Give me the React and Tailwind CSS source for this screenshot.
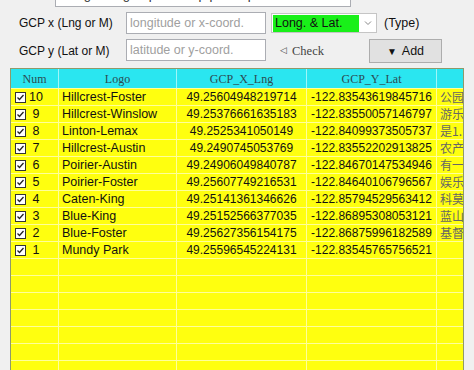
import React from 'react'

const rows = [
  [10, 'Hillcrest-Foster', '49.25604948219714', '-122.83543619845716', '公园'],
  [9, 'Hillcrest-Winslow', '49.25376661635183', '-122.83550057146797', '游乐'],
  [8, 'Linton-Lemax', '49.2525341050149', '-122.84099373505737', '是1.'],
  [7, 'Hillcrest-Austin', '49.2490745053769', '-122.83552202913825', '农产'],
  [6, 'Poirier-Austin', '49.24906049840787', '-122.84670147534946', '有一'],
  [5, 'Poirier-Foster', '49.25607749216531', '-122.84640106796567', '娱乐'],
  [4, 'Caten-King', '49.25141361346626', '-122.85794529563412', '科莫'],
  [3, 'Blue-King', '49.25152566377035', '-122.86895308053121', '蓝山'],
  [2, 'Blue-Foster', '49.25627356154175', '-122.86875996182589', '基督'],
  [1, 'Mundy Park', '49.25596545224131', '-122.83545765756521', ''],
]

const CheckBox = () => (
  <span className="ml-[4px] w-[11px] h-[11px] border border-[#333] bg-white flex items-center justify-center shrink-0">
    <svg width="9" height="9" viewBox="0 0 9 9">
      <path d="M1.5 4.5 L3.5 6.5 L7.5 2" fill="none" stroke="#222" strokeWidth="1.3" />
    </svg>
  </span>
)

const Row = ({ r }) => (
  <div className="flex h-[17px] border-b border-[#ffff9a] text-[12px] leading-[16px] text-[#111]">
    <div className="w-[48px] flex items-center border-r border-[#ffff9a]">
      {r && <CheckBox />}
      {r && <span className="ml-[2px] w-[16px] text-center text-[12.5px]">{r[0]}</span>}
    </div>
    <div className="w-[118px] pl-[3px] border-r border-[#ffff9a] flex items-center whitespace-nowrap overflow-hidden text-[12.5px]">{r && r[1]}</div>
    <div className="w-[130px] border-r border-[#ffff9a] flex items-center justify-center whitespace-nowrap overflow-hidden">{r && r[2]}</div>
    <div className="w-[130px] border-r border-[#ffff9a] flex items-center justify-center whitespace-nowrap overflow-hidden">{r && r[3]}</div>
    <div className="flex-1 pl-[3px] overflow-hidden whitespace-nowrap text-[12px] text-[#666] font-['Noto_Sans_CJK_SC',sans-serif] flex items-center">{r && r[4]}</div>
  </div>
)

export default function App() {
  const empties = Array.from({ length: 7 })
  return (
    <div className="w-[474px] h-[370px] overflow-hidden bg-[#f0f0f0] font-['Liberation_Sans',sans-serif]">
      <div className="ml-[55px] w-[296px] h-[7px] overflow-hidden bg-white border-x border-b border-[#abadb3]">
        <div className="-mt-[14px] pl-[6px] text-[13px] leading-[18px] text-[#333] whitespace-nowrap">Longitude groups of map points pairs</div>
      </div>

      <div className="flex items-center h-[22px] mt-[5px] text-[12px] text-[#111]">
        <div className="w-[126px] pl-[19px] whitespace-nowrap">GCP x (Lng or M)</div>
        <input className="w-[140px] h-[22px] border border-[#abadb3] bg-white px-[3px] text-[12.5px] placeholder:text-[#a0a0a0] outline-none" placeholder="longitude or x-coord." />
        <div className="ml-[5px] w-[106px] h-[20px] border border-[#c5c5c5] bg-white flex items-center">
          <div className="ml-[1px] w-[86px] h-[17px] bg-[#19f019] pl-[2px] leading-[17px] text-[12.5px] text-[#111]">Long. &amp; Lat.</div>
          <svg className="ml-[5px]" width="8" height="6" viewBox="0 0 8 6">
            <path d="M1 1.5 L4 4.5 L7 1.5" fill="none" stroke="#888" strokeWidth="1" />
          </svg>
        </div>
        <div className="ml-[7px] text-[12.5px]">(Type)</div>
      </div>

      <div className="flex items-center h-[24px] mt-[5px] text-[12px] text-[#111]">
        <div className="w-[126px] pl-[19px] whitespace-nowrap">GCP y (Lat or M)</div>
        <input className="w-[140px] h-[22px] self-start border border-[#abadb3] bg-white px-[3px] text-[12.5px] placeholder:text-[#a0a0a0] outline-none" placeholder="latitude or y-coord." />
        <div className="ml-[14px] w-[89px] flex items-center text-[#444] font-['Liberation_Serif',serif] text-[12.5px]">
          <span className="text-[9px] mr-[5px]">◁</span>Check
        </div>
        <button className="w-[73px] h-[24px] border border-[#adadad] bg-[#e1e1e1] flex items-center justify-center gap-[5px] text-[12.5px] text-[#111]">
          <span className="text-[10px]">▼</span>Add
        </button>
      </div>

      <div className="ml-[10px] mt-[5px] w-[454px] border-x border-t border-[#8f9a6a] bg-[#ffff0f]">
        <div className="flex h-[20px] bg-[#2ae6f0] text-[12px] text-[#2b4b52] font-['Liberation_Serif',serif] border-b border-[#ffff9a]">
          <div className="w-[48px] flex items-center justify-center border-r border-[#9ff6f8]">Num</div>
          <div className="w-[118px] flex items-center justify-center border-r border-[#9ff6f8]">Logo</div>
          <div className="w-[130px] flex items-center justify-center border-r border-[#9ff6f8]">GCP_X_Lng</div>
          <div className="w-[130px] flex items-center justify-center border-r border-[#9ff6f8]">GCP_Y_Lat</div>
          <div className="flex-1"></div>
        </div>
        {rows.map(r => <Row key={r[0]} r={r} />)}
        {empties.map((_, i) => <Row key={'e' + i} />)}
      </div>
    </div>
  )
}
